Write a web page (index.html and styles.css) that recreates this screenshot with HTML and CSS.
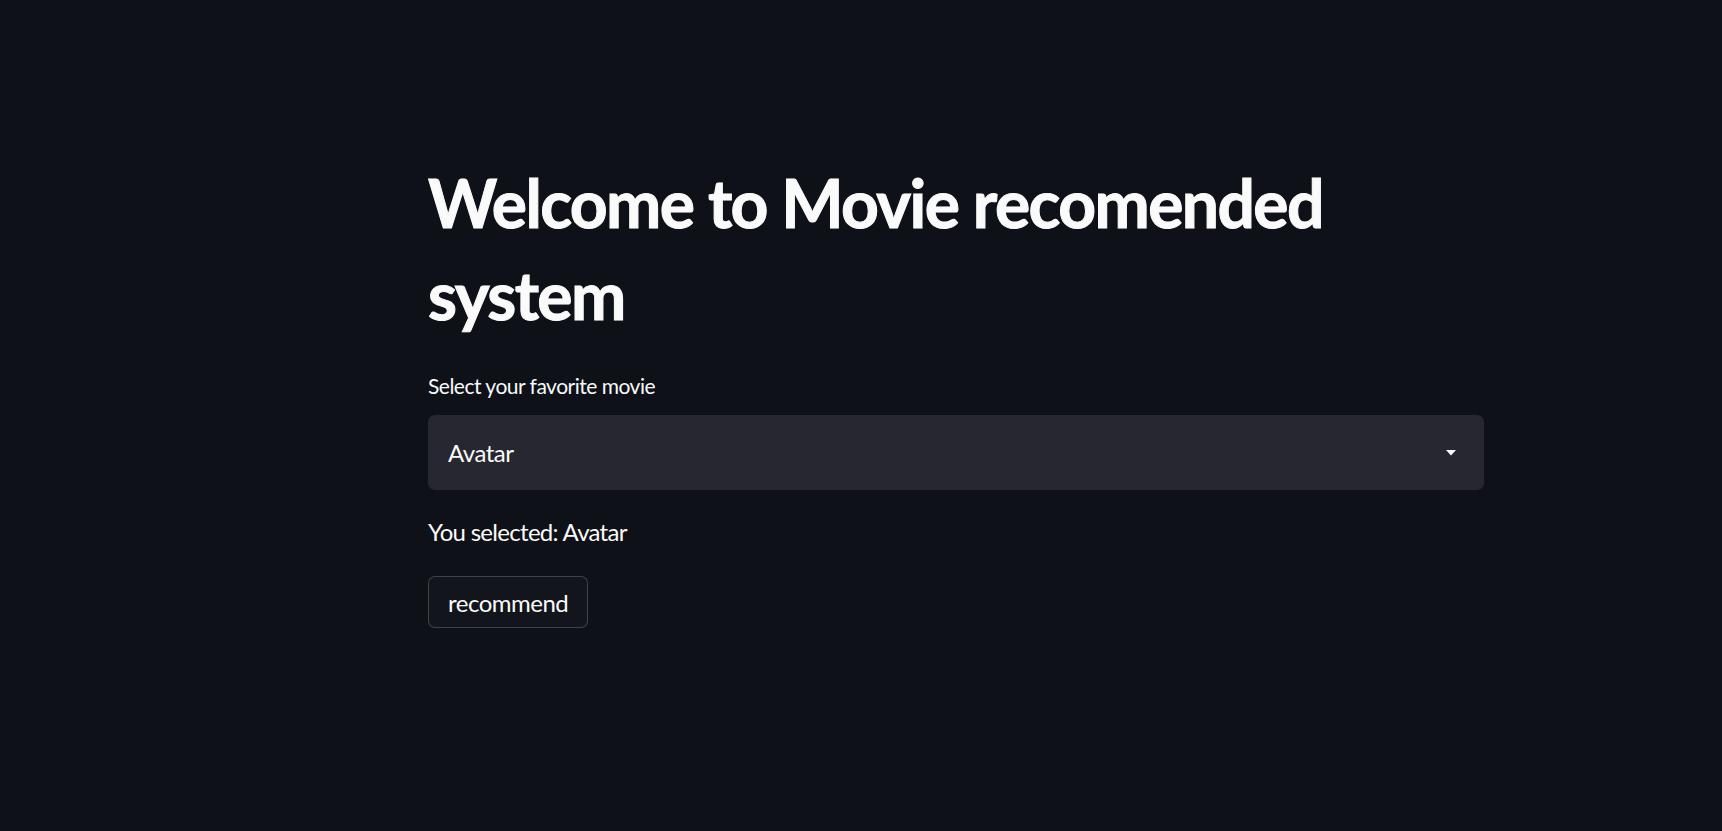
FILE: index.html
```html
<!DOCTYPE html>
<html lang="en">
<head>
    <meta charset="UTF-8">
    <meta name="viewport" content="width=device-width, initial-scale=1.0">
    <title>Movie recomended system</title>
    <link rel="stylesheet" href="styles.css">
</head>
<body>
    <div class="main">
        <div class="block">
            <h1 class="title">Welcome to Movie recomended system</h1>
            <label class="label" for="movie">Select your favorite movie</label>
            <div class="select" id="movie">
                <span class="select-value">Avatar</span>
                <svg class="select-arrow" width="10" height="6" viewBox="0 0 10 6">
                    <path d="M0 0 L10 0 L5 5.5 Z" fill="#fafafa"/>
                </svg>
            </div>
            <p class="selected">You selected: Avatar</p>
            <button class="btn" type="button">recommend</button>
        </div>
    </div>
</body>
</html>
```

FILE: styles.css
```css
body {
    margin: 0;
    background: #0e1117;
    color: #fafafa;
    font-family: 'Lato', 'Noto Sans', sans-serif;
    letter-spacing: -0.5px;
    height: 100vh;
    overflow: hidden;
}

.main {
    display: flex;
    padding-left: 428px;
}

.block {
    width: 1056px;
    display: flex;
    flex-direction: column;
    align-items: flex-start;
    padding-top: 157px;
}

.title {
    margin: 0;
    font-size: 66px;
    font-weight: 700;
    line-height: 92px;
    letter-spacing: -1.6px;
    -webkit-text-stroke: 1px #fafafa;
    width: 960px;
}

.label {
    margin-top: 30px;
    font-size: 21px;
    line-height: 30px;
}

.select {
    margin-top: 14px;
    width: 100%;
    height: 75px;
    box-sizing: border-box;
    background: #262730;
    border-radius: 7px;
    display: flex;
    align-items: center;
    justify-content: space-between;
    padding: 0 28px 0 20px;
}

.select-value {
    font-size: 24px;
}

.selected {
    margin: 24px 0 0;
    font-size: 24px;
    line-height: 36px;
    letter-spacing: -0.7px;
}

.btn {
    margin-top: 26px;
    height: 52px;
    padding: 0 19px;
    background: #12151c;
    color: #fafafa;
    border: 1px solid rgba(250, 250, 250, 0.2);
    border-radius: 7px;
    font-family: inherit;
    font-size: 24px;
    letter-spacing: -0.5px;
}
```
